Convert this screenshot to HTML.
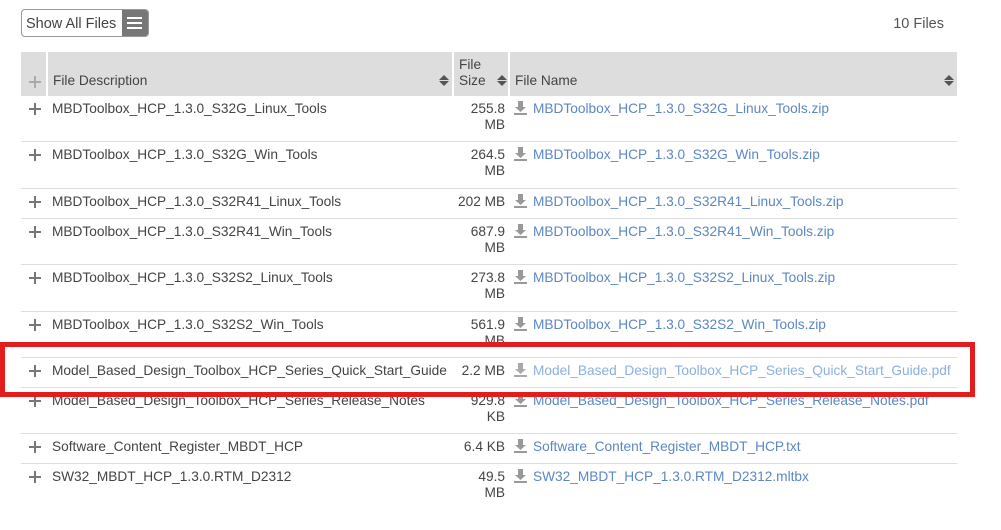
<!DOCTYPE html>
<html><head><style>
body{margin:0;width:1001px;height:530px;background:#fff;font-family:"Liberation Sans",sans-serif;font-size:13.7px;color:#444;position:relative;overflow:hidden}
.btn{position:absolute;left:21px;top:9px;width:128px;height:28px;border:1px solid #999;border-radius:4px;box-sizing:border-box;overflow:hidden}
.btn span{position:absolute;left:4px;top:6px;font-size:14.5px;color:#444}
.btn i{position:absolute;right:0;top:0;width:26px;height:28px;background:#777}
.btn i b{position:absolute;left:5px;width:15px;height:2px;background:#fff}
.cnt{position:absolute;right:57px;top:16px;color:#555;font-size:14.5px}
table{position:absolute;left:21px;top:52px;width:936px;border-collapse:collapse;table-layout:fixed}
th{background:#ddd;font-weight:normal;text-align:left;vertical-align:bottom;padding:0 5px 6px;height:36px;border-left:2px solid #fff;line-height:16px;position:relative}
th:first-child{border-left:none}
td{vertical-align:top;padding:5px 5px 0;line-height:16px;border-top:1px solid #ddd;white-space:nowrap}
tr.s td{height:24px}tr.d td{height:40.4px}
.p{padding-left:8px;padding-right:0}
.p svg{display:block;margin-top:2px}
.sz{text-align:right;padding-right:4px}
a{color:#5b87c4;text-decoration:none}
.dl{display:inline-block;width:13px;height:14px;vertical-align:-2px;margin-right:6px}
.sort{position:absolute;right:8px;bottom:9px;width:0}
.sort:before,.sort:after{content:"";position:absolute;left:-5px;border-left:5px solid transparent;border-right:5px solid transparent}
.sort:before{bottom:6px;border-bottom:5px solid #555}
.sort:after{top:-5px;border-top:5px solid #555}
.red{position:absolute;left:0;top:342px;width:975px;height:55px;border:5px solid #e21d1d;box-sizing:border-box}
</style></head><body>
<div class="btn"><span>Show All Files</span><i><b style="top:7px"></b><b style="top:12px"></b><b style="top:17px"></b></i></div>
<div class="cnt">10 Files</div>
<table>
<colgroup><col style="width:26px"><col style="width:406px"><col style="width:56px"><col></colgroup>
<tr><th class="p" style="padding-bottom:7px"><svg width="12" height="12"><path d="M5 0h2v12H5zM0 5h12v2H0z" fill="#aaa"/></svg></th><th>File Description<span class="sort"></span></th><th>File<br>Size<span class="sort" style="right:6px"></span></th><th>File Name<span class="sort"></span></th></tr>
<tr class="d"><td class="p"><svg width="12" height="12"><path d="M5 0h2v12H5zM0 5h12v2H0z" fill="#777"/></svg></td><td>MBDToolbox_HCP_1.3.0_S32G_Linux_Tools</td><td class="sz">255.8<br>MB</td><td><svg class="dl" viewBox="0 0 13 14"><path d="M4 0h5v6h3l-5.5 5L1 6h3z M0 12h13v2H0z" fill="#999"/></svg><a>MBDToolbox_HCP_1.3.0_S32G_Linux_Tools.zip</a></td></tr>
<tr class="d"><td class="p"><svg width="12" height="12"><path d="M5 0h2v12H5zM0 5h12v2H0z" fill="#777"/></svg></td><td>MBDToolbox_HCP_1.3.0_S32G_Win_Tools</td><td class="sz">264.5<br>MB</td><td><svg class="dl" viewBox="0 0 13 14"><path d="M4 0h5v6h3l-5.5 5L1 6h3z M0 12h13v2H0z" fill="#999"/></svg><a>MBDToolbox_HCP_1.3.0_S32G_Win_Tools.zip</a></td></tr>
<tr class="s"><td class="p"><svg width="12" height="12"><path d="M5 0h2v12H5zM0 5h12v2H0z" fill="#777"/></svg></td><td>MBDToolbox_HCP_1.3.0_S32R41_Linux_Tools</td><td class="sz">202 MB</td><td><svg class="dl" viewBox="0 0 13 14"><path d="M4 0h5v6h3l-5.5 5L1 6h3z M0 12h13v2H0z" fill="#999"/></svg><a>MBDToolbox_HCP_1.3.0_S32R41_Linux_Tools.zip</a></td></tr>
<tr class="d"><td class="p"><svg width="12" height="12"><path d="M5 0h2v12H5zM0 5h12v2H0z" fill="#777"/></svg></td><td>MBDToolbox_HCP_1.3.0_S32R41_Win_Tools</td><td class="sz">687.9<br>MB</td><td><svg class="dl" viewBox="0 0 13 14"><path d="M4 0h5v6h3l-5.5 5L1 6h3z M0 12h13v2H0z" fill="#999"/></svg><a>MBDToolbox_HCP_1.3.0_S32R41_Win_Tools.zip</a></td></tr>
<tr class="d"><td class="p"><svg width="12" height="12"><path d="M5 0h2v12H5zM0 5h12v2H0z" fill="#777"/></svg></td><td>MBDToolbox_HCP_1.3.0_S32S2_Linux_Tools</td><td class="sz">273.8<br>MB</td><td><svg class="dl" viewBox="0 0 13 14"><path d="M4 0h5v6h3l-5.5 5L1 6h3z M0 12h13v2H0z" fill="#999"/></svg><a>MBDToolbox_HCP_1.3.0_S32S2_Linux_Tools.zip</a></td></tr>
<tr class="d"><td class="p"><svg width="12" height="12"><path d="M5 0h2v12H5zM0 5h12v2H0z" fill="#777"/></svg></td><td>MBDToolbox_HCP_1.3.0_S32S2_Win_Tools</td><td class="sz">561.9<br>MB</td><td><svg class="dl" viewBox="0 0 13 14"><path d="M4 0h5v6h3l-5.5 5L1 6h3z M0 12h13v2H0z" fill="#999"/></svg><a>MBDToolbox_HCP_1.3.0_S32S2_Win_Tools.zip</a></td></tr>
<tr class="s"><td class="p"><svg width="12" height="12"><path d="M5 0h2v12H5zM0 5h12v2H0z" fill="#777"/></svg></td><td>Model_Based_Design_Toolbox_HCP_Series_Quick_Start_Guide</td><td class="sz">2.2 MB</td><td><svg class="dl" viewBox="0 0 13 14"><path d="M4 0h5v6h3l-5.5 5L1 6h3z M0 12h13v2H0z" fill="#aaa"/></svg><a style="color:#8ab0de">Model_Based_Design_Toolbox_HCP_Series_Quick_Start_Guide.pdf</a></td></tr>
<tr class="d"><td class="p"><svg width="12" height="12"><path d="M5 0h2v12H5zM0 5h12v2H0z" fill="#777"/></svg></td><td>Model_Based_Design_Toolbox_HCP_Series_Release_Notes</td><td class="sz">929.8<br>KB</td><td><svg class="dl" viewBox="0 0 13 14"><path d="M4 0h5v6h3l-5.5 5L1 6h3z M0 12h13v2H0z" fill="#999"/></svg><a>Model_Based_Design_Toolbox_HCP_Series_Release_Notes.pdf</a></td></tr>
<tr class="s"><td class="p"><svg width="12" height="12"><path d="M5 0h2v12H5zM0 5h12v2H0z" fill="#777"/></svg></td><td>Software_Content_Register_MBDT_HCP</td><td class="sz">6.4 KB</td><td><svg class="dl" viewBox="0 0 13 14"><path d="M4 0h5v6h3l-5.5 5L1 6h3z M0 12h13v2H0z" fill="#999"/></svg><a>Software_Content_Register_MBDT_HCP.txt</a></td></tr>
<tr class="d"><td class="p"><svg width="12" height="12"><path d="M5 0h2v12H5zM0 5h12v2H0z" fill="#777"/></svg></td><td>SW32_MBDT_HCP_1.3.0.RTM_D2312</td><td class="sz">49.5<br>MB</td><td><svg class="dl" viewBox="0 0 13 14"><path d="M4 0h5v6h3l-5.5 5L1 6h3z M0 12h13v2H0z" fill="#999"/></svg><a>SW32_MBDT_HCP_1.3.0.RTM_D2312.mltbx</a></td></tr>
</table>
<div class="red"></div>
</body></html>
